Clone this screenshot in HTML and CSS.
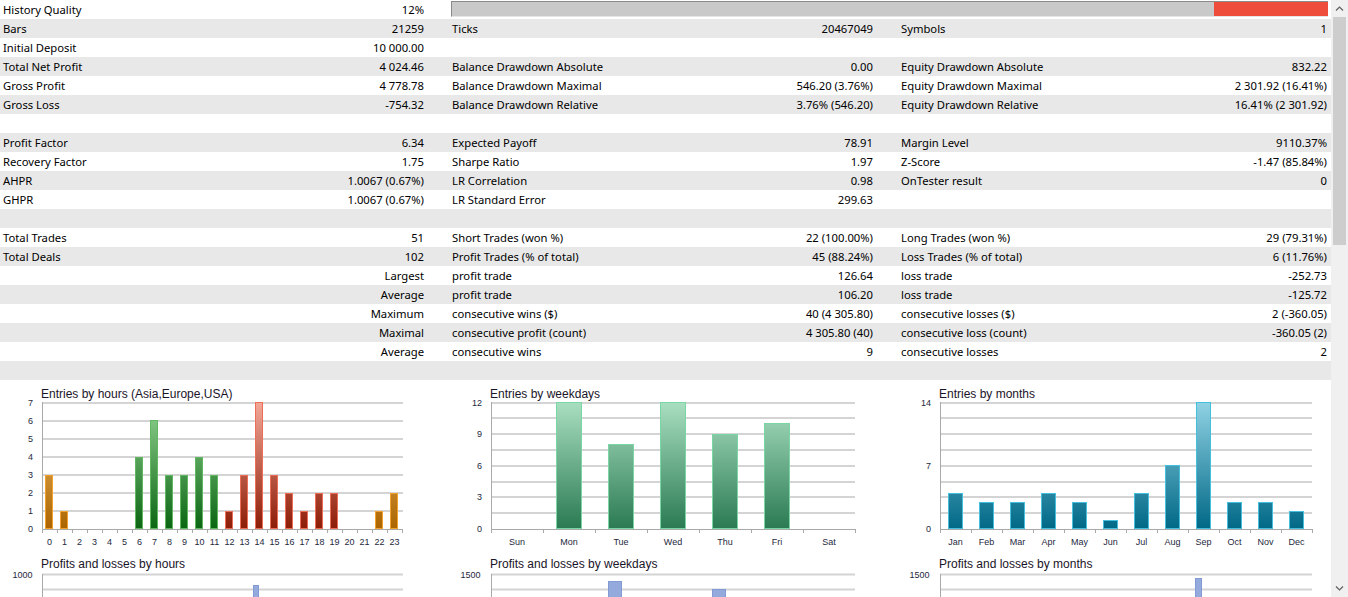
FILE: index.html
```html
<!DOCTYPE html>
<html>
<head>
<meta charset="utf-8">
<title>Backtest report</title>
<link rel="stylesheet" href="styles.css">
</head>
<body>
<div class="main">
  <div class="table">
    <div class="row">
      <div class="cell"><span>History Quality</span><span>12%</span></div>
      <div class="progress"><div class="fill"></div></div>
    </div>
    <div class="row">
      <div class="cell"><span>Bars</span><span>21259</span></div>
      <div class="cell"><span>Ticks</span><span>20467049</span></div>
      <div class="cell"><span>Symbols</span><span>1</span></div>
    </div>
    <div class="row">
      <div class="cell"><span>Initial Deposit</span><span>10 000.00</span></div>
      <div class="cell"></div>
      <div class="cell"></div>
    </div>
    <div class="row">
      <div class="cell"><span>Total Net Profit</span><span>4 024.46</span></div>
      <div class="cell"><span>Balance Drawdown Absolute</span><span>0.00</span></div>
      <div class="cell"><span>Equity Drawdown Absolute</span><span>832.22</span></div>
    </div>
    <div class="row">
      <div class="cell"><span>Gross Profit</span><span>4 778.78</span></div>
      <div class="cell"><span>Balance Drawdown Maximal</span><span>546.20 (3.76%)</span></div>
      <div class="cell"><span>Equity Drawdown Maximal</span><span>2 301.92 (16.41%)</span></div>
    </div>
    <div class="row">
      <div class="cell"><span>Gross Loss</span><span>-754.32</span></div>
      <div class="cell"><span>Balance Drawdown Relative</span><span>3.76% (546.20)</span></div>
      <div class="cell"><span>Equity Drawdown Relative</span><span>16.41% (2 301.92)</span></div>
    </div>
    <div class="row"></div>
    <div class="row">
      <div class="cell"><span>Profit Factor</span><span>6.34</span></div>
      <div class="cell"><span>Expected Payoff</span><span>78.91</span></div>
      <div class="cell"><span>Margin Level</span><span>9110.37%</span></div>
    </div>
    <div class="row">
      <div class="cell"><span>Recovery Factor</span><span>1.75</span></div>
      <div class="cell"><span>Sharpe Ratio</span><span>1.97</span></div>
      <div class="cell"><span>Z-Score</span><span>-1.47 (85.84%)</span></div>
    </div>
    <div class="row">
      <div class="cell"><span>AHPR</span><span>1.0067 (0.67%)</span></div>
      <div class="cell"><span>LR Correlation</span><span>0.98</span></div>
      <div class="cell"><span>OnTester result</span><span>0</span></div>
    </div>
    <div class="row">
      <div class="cell"><span>GHPR</span><span>1.0067 (0.67%)</span></div>
      <div class="cell"><span>LR Standard Error</span><span>299.63</span></div>
      <div class="cell"></div>
    </div>
    <div class="row"></div>
    <div class="row">
      <div class="cell"><span>Total Trades</span><span>51</span></div>
      <div class="cell"><span>Short Trades (won %)</span><span>22 (100.00%)</span></div>
      <div class="cell"><span>Long Trades (won %)</span><span>29 (79.31%)</span></div>
    </div>
    <div class="row">
      <div class="cell"><span>Total Deals</span><span>102</span></div>
      <div class="cell"><span>Profit Trades (% of total)</span><span>45 (88.24%)</span></div>
      <div class="cell"><span>Loss Trades (% of total)</span><span>6 (11.76%)</span></div>
    </div>
    <div class="row">
      <div class="cell"><span></span><span>Largest</span></div>
      <div class="cell"><span>profit trade</span><span>126.64</span></div>
      <div class="cell"><span>loss trade</span><span>-252.73</span></div>
    </div>
    <div class="row">
      <div class="cell"><span></span><span>Average</span></div>
      <div class="cell"><span>profit trade</span><span>106.20</span></div>
      <div class="cell"><span>loss trade</span><span>-125.72</span></div>
    </div>
    <div class="row">
      <div class="cell"><span></span><span>Maximum</span></div>
      <div class="cell"><span>consecutive wins ($)</span><span>40 (4 305.80)</span></div>
      <div class="cell"><span>consecutive losses ($)</span><span>2 (-360.05)</span></div>
    </div>
    <div class="row">
      <div class="cell"><span></span><span>Maximal</span></div>
      <div class="cell"><span>consecutive profit (count)</span><span>4 305.80 (40)</span></div>
      <div class="cell"><span>consecutive loss (count)</span><span>-360.05 (2)</span></div>
    </div>
    <div class="row">
      <div class="cell"><span></span><span>Average</span></div>
      <div class="cell"><span>consecutive wins</span><span>9</span></div>
      <div class="cell"><span>consecutive losses</span><span>2</span></div>
    </div>
    <div class="row"></div>
  </div>

  <div class="charts">
    <!-- Entries by hours -->
    <svg class="chart" width="449" height="168" viewBox="0 0 449 168">
      <defs>
        <linearGradient id="gOr" gradientUnits="userSpaceOnUse" x1="0" y1="22" x2="0" y2="149">
          <stop offset="0" stop-color="#f8c676"/><stop offset="1" stop-color="#ab6400"/>
        </linearGradient>
        <linearGradient id="gGr" gradientUnits="userSpaceOnUse" x1="0" y1="22" x2="0" y2="149">
          <stop offset="0" stop-color="#94d494"/><stop offset="1" stop-color="#0a6512"/>
        </linearGradient>
        <linearGradient id="gRd" gradientUnits="userSpaceOnUse" x1="0" y1="22" x2="0" y2="149">
          <stop offset="0" stop-color="#f3a898"/><stop offset="1" stop-color="#8c1c06"/>
        </linearGradient>
        <linearGradient id="gWk" gradientUnits="userSpaceOnUse" x1="0" y1="22" x2="0" y2="149">
          <stop offset="0" stop-color="#a9dfc1"/><stop offset="1" stop-color="#2a7a52"/>
        </linearGradient>
        <linearGradient id="gMo" gradientUnits="userSpaceOnUse" x1="0" y1="22" x2="0" y2="149">
          <stop offset="0" stop-color="#90d2e4"/><stop offset="1" stop-color="#006886"/>
        </linearGradient>
      </defs>
      <text class="ttl" x="41" y="17.5">Entries by hours (Asia,Europe,USA)</text>
      <path class="grid" d="M42 23H403M42 41H403M42 59H403M42 77H403M42 95H403M42 113H403M42 131H403"/>
      <path class="axis" d="M42.5 22V153M42 149.5H403M57.5 149V153M72.5 149V153M87.5 149V153M102.5 149V153M117.5 149V153M132.5 149V153M147.5 149V153M162.5 149V153M177.5 149V153M192.5 149V153M207.5 149V153M222.5 149V153M237.5 149V153M252.5 149V153M267.5 149V153M282.5 149V153M297.5 149V153M312.5 149V153M327.5 149V153M342.5 149V153M357.5 149V153M372.5 149V153M387.5 149V153M402.5 149V153"/>
      <g class="ylab">
        <text x="33" y="152">0</text><text x="33" y="134">1</text><text x="33" y="116">2</text><text x="33" y="98">3</text>
        <text x="33" y="80">4</text><text x="33" y="62">5</text><text x="33" y="44">6</text><text x="33" y="26">7</text>
      </g>
      <g class="xlab">
        <text x="49.5" y="165">0</text><text x="64.5" y="165">1</text><text x="79.5" y="165">2</text><text x="94.5" y="165">3</text>
        <text x="109.5" y="165">4</text><text x="124.5" y="165">5</text><text x="139.5" y="165">6</text><text x="154.5" y="165">7</text>
        <text x="169.5" y="165">8</text><text x="184.5" y="165">9</text><text x="199.5" y="165">10</text><text x="214.5" y="165">11</text>
        <text x="229.5" y="165">12</text><text x="244.5" y="165">13</text><text x="259.5" y="165">14</text><text x="274.5" y="165">15</text>
        <text x="289.5" y="165">16</text><text x="304.5" y="165">17</text><text x="319.5" y="165">18</text><text x="334.5" y="165">19</text>
        <text x="349.5" y="165">20</text><text x="364.5" y="165">21</text><text x="379.5" y="165">22</text><text x="394.5" y="165">23</text>
      </g>
      <g class="bar-or">
        <rect x="45.5" y="95.5" width="7" height="53"/>
        <rect x="60.5" y="131.5" width="7" height="17"/>
        <rect x="375.5" y="131.5" width="7" height="17"/>
        <rect x="390.5" y="113.5" width="7" height="35"/>
      </g>
      <g class="bar-gr">
        <rect x="135.5" y="77.5" width="7" height="71"/>
        <rect x="150.5" y="40.5" width="7" height="108"/>
        <rect x="165.5" y="95.5" width="7" height="53"/>
        <rect x="180.5" y="95.5" width="7" height="53"/>
        <rect x="195.5" y="77.5" width="7" height="71"/>
        <rect x="210.5" y="95.5" width="7" height="53"/>
      </g>
      <g class="bar-rd">
        <rect x="225.5" y="131.5" width="7" height="17"/>
        <rect x="240.5" y="95.5" width="7" height="53"/>
        <rect x="255.5" y="22.5" width="7" height="126"/>
        <rect x="270.5" y="95.5" width="7" height="53"/>
        <rect x="285.5" y="113.5" width="7" height="35"/>
        <rect x="300.5" y="131.5" width="7" height="17"/>
        <rect x="315.5" y="113.5" width="7" height="35"/>
        <rect x="330.5" y="113.5" width="7" height="35"/>
      </g>
    </svg>

    <!-- Entries by weekdays -->
    <svg class="chart" width="449" height="168" viewBox="0 0 449 168">
      <text class="ttl" x="41" y="17.5">Entries by weekdays</text>
      <path class="grid" d="M42 23H406M42 38H406M42 54H406M42 70H406M42 86H406M42 102H406M42 117H406M42 133H406"/>
      <path class="axis" d="M42.5 22V153M42 149.5H406M94.5 149V153M146.5 149V153M198.5 149V153M250.5 149V153M302.5 149V153M354.5 149V153M406.5 149V153"/>
      <g class="ylab">
        <text x="33" y="152">0</text><text x="33" y="120">3</text><text x="33" y="89">6</text><text x="33" y="57">9</text><text x="33" y="26">12</text>
      </g>
      <g class="xlab">
        <text x="68" y="165">Sun</text><text x="120" y="165">Mon</text><text x="172" y="165">Tue</text><text x="224" y="165">Wed</text>
        <text x="276" y="165">Thu</text><text x="328" y="165">Fri</text><text x="380" y="165">Sat</text>
      </g>
      <g class="bar-wk">
        <rect x="107.5" y="22.5" width="25" height="126"/>
        <rect x="159.5" y="64.5" width="25" height="84"/>
        <rect x="211.5" y="22.5" width="25" height="126"/>
        <rect x="263.5" y="54.5" width="25" height="94"/>
        <rect x="315.5" y="43.5" width="25" height="105"/>
      </g>
    </svg>

    <!-- Entries by months -->
    <svg class="chart" width="433" height="168" viewBox="0 0 433 168">
      <text class="ttl" x="41" y="17.5">Entries by months</text>
      <path class="grid" d="M42 23H414M42 38H414M42 54H414M42 70H414M42 86H414M42 102H414M42 117H414M42 133H414"/>
      <path class="axis" d="M42.5 22V153M42 149.5H414M73.5 149V153M104.5 149V153M135.5 149V153M166.5 149V153M197.5 149V153M228.5 149V153M259.5 149V153M290.5 149V153M321.5 149V153M352.5 149V153M383.5 149V153M414.5 149V153"/>
      <g class="ylab">
        <text x="33" y="152">0</text><text x="33" y="89">7</text><text x="33" y="26">14</text>
      </g>
      <g class="xlab">
        <text x="57.5" y="165">Jan</text><text x="88.5" y="165">Feb</text><text x="119.5" y="165">Mar</text><text x="150.5" y="165">Apr</text>
        <text x="181.5" y="165">May</text><text x="212.5" y="165">Jun</text><text x="243.5" y="165">Jul</text><text x="274.5" y="165">Aug</text>
        <text x="305.5" y="165">Sep</text><text x="336.5" y="165">Oct</text><text x="367.5" y="165">Nov</text><text x="398.5" y="165">Dec</text>
      </g>
      <g class="bar-mo">
        <rect x="50.5" y="113.5" width="14" height="35"/>
        <rect x="81.5" y="122.5" width="14" height="26"/>
        <rect x="112.5" y="122.5" width="14" height="26"/>
        <rect x="143.5" y="113.5" width="14" height="35"/>
        <rect x="174.5" y="122.5" width="14" height="26"/>
        <rect x="205.5" y="140.5" width="14" height="8"/>
        <rect x="236.5" y="113.5" width="14" height="35"/>
        <rect x="267.5" y="85.5" width="14" height="63"/>
        <rect x="298.5" y="22.5" width="14" height="126"/>
        <rect x="329.5" y="122.5" width="14" height="26"/>
        <rect x="360.5" y="122.5" width="14" height="26"/>
        <rect x="391.5" y="131.5" width="14" height="17"/>
      </g>
    </svg>

    <!-- Profits and losses by hours -->
    <svg class="chart" width="449" height="60" viewBox="0 0 449 60">
      <text class="ttl" x="41" y="20">Profits and losses by hours</text>
      <path class="grid" d="M42 26.5H403M42 41.5H403"/>
      <path class="axis" d="M42.5 26V60"/>
      <g class="ylab"><text x="32.5" y="29.5">1000</text></g>
      <g class="bar-pl"><rect x="253.5" y="37.5" width="5" height="30"/></g>
    </svg>

    <!-- Profits and losses by weekdays -->
    <svg class="chart" width="449" height="60" viewBox="0 0 449 60">
      <text class="ttl" x="41" y="20">Profits and losses by weekdays</text>
      <path class="grid" d="M42 26.5H406M42 41.5H406"/>
      <path class="axis" d="M42.5 26V60"/>
      <g class="ylab"><text x="31.5" y="29.5">1500</text></g>
      <g class="bar-pl">
        <rect x="159.5" y="33.5" width="13" height="30"/>
        <rect x="263.5" y="41.5" width="13" height="30"/>
      </g>
    </svg>

    <!-- Profits and losses by months -->
    <svg class="chart" width="433" height="60" viewBox="0 0 433 60">
      <text class="ttl" x="41" y="20">Profits and losses by months</text>
      <path class="grid" d="M42 26.5H414M42 41.5H414"/>
      <path class="axis" d="M42.5 26V60"/>
      <g class="ylab"><text x="31.5" y="29.5">1500</text></g>
      <g class="bar-pl"><rect x="297.5" y="30.5" width="6" height="40"/></g>
    </svg>
  </div>
</div>

<div class="scrollbar">
  <div class="sb-btn">
    <svg width="17" height="17" viewBox="0 0 17 17"><polyline class="chev" points="5,10.5 8.5,7 12,10.5"/></svg>
  </div>
  <div class="sb-track"><div class="sb-thumb"></div></div>
  <div class="sb-btn">
    <svg width="17" height="17" viewBox="0 0 17 17"><polyline class="chev" points="5,6.5 8.5,10 12,6.5"/></svg>
  </div>
</div>
</body>
</html>
```

FILE: styles.css
```css
html, body {
  margin: 0;
  padding: 0;
  background: #ffffff;
}

body {
  display: flex;
  width: 1348px;
  height: 597px;
  overflow: hidden;
  font-family: "Noto Sans", "Open Sans", sans-serif;
  font-size: 11.25px;
  color: #000000;
}

.main {
  width: 1331px;
  flex: 0 0 1331px;
  overflow: hidden;
}

.row {
  display: grid;
  grid-template-columns: 449px 449px 433px;
  height: 19px;
  line-height: 19px;
}

.row:nth-child(even) {
  background: #e8e8e8;
}

.cell {
  display: flex;
  justify-content: space-between;
  padding: 0 25px 0 3px;
  white-space: nowrap;
  overflow: hidden;
}

.cell:nth-child(3) {
  padding-right: 4px;
}

.progress {
  grid-column: 2 / 4;
  margin: 1px 3px 2px 2px;
  display: flex;
  justify-content: flex-end;
  background: #c9c9c9;
  border-top: 1px solid #8a8a8a;
  border-left: 1px solid #8a8a8a;
  border-bottom: 1px solid #e6e6e6;
}

.progress .fill {
  width: 114px;
  background: #ee4d3c;
}

.charts {
  display: grid;
  grid-template-columns: 449px 449px 433px;
}

.chart {
  display: block;
  overflow: visible;
}

.ttl {
  font-family: "Liberation Sans", Arial, sans-serif;
  font-size: 12px;
  fill: #1a1428;
}

.ylab text {
  font-family: "Liberation Sans", Arial, sans-serif;
  font-size: 9px;
  fill: #1e2840;
  text-anchor: end;
}

.xlab text {
  font-family: "Liberation Sans", Arial, sans-serif;
  font-size: 9px;
  fill: #1e2840;
  text-anchor: middle;
}

.grid {
  stroke: #d4d4d4;
  stroke-width: 2;
  fill: none;
}

.axis {
  stroke: #a9a9a9;
  stroke-width: 1;
  fill: none;
}

.bar-or rect { fill: url(#gOr); stroke: #f2a22c; stroke-width: 1; }
.bar-gr rect { fill: url(#gGr); stroke: #62b862; stroke-width: 1; }
.bar-rd rect { fill: url(#gRd); stroke: #ec6e56; stroke-width: 1; }
.bar-wk rect { fill: url(#gWk); stroke: #7ad6a4; stroke-width: 1; }
.bar-mo rect { fill: url(#gMo); stroke: #45bfde; stroke-width: 1; }
.bar-pl rect { fill: #94a9dc; stroke: #829bd6; stroke-width: 1; }

.scrollbar {
  width: 17px;
  flex: 0 0 17px;
  height: 597px;
  background: #f0f0f0;
  display: flex;
  flex-direction: column;
}

.sb-btn {
  height: 17px;
  flex: 0 0 17px;
}

.sb-btn svg {
  display: block;
}

.chev {
  fill: none;
  stroke: #606060;
  stroke-width: 1.2;
}

.sb-track {
  flex: 1;
  display: flex;
  justify-content: center;
}

.sb-thumb {
  width: 13px;
  height: 228px;
  background: #cdcdcd;
}
```
